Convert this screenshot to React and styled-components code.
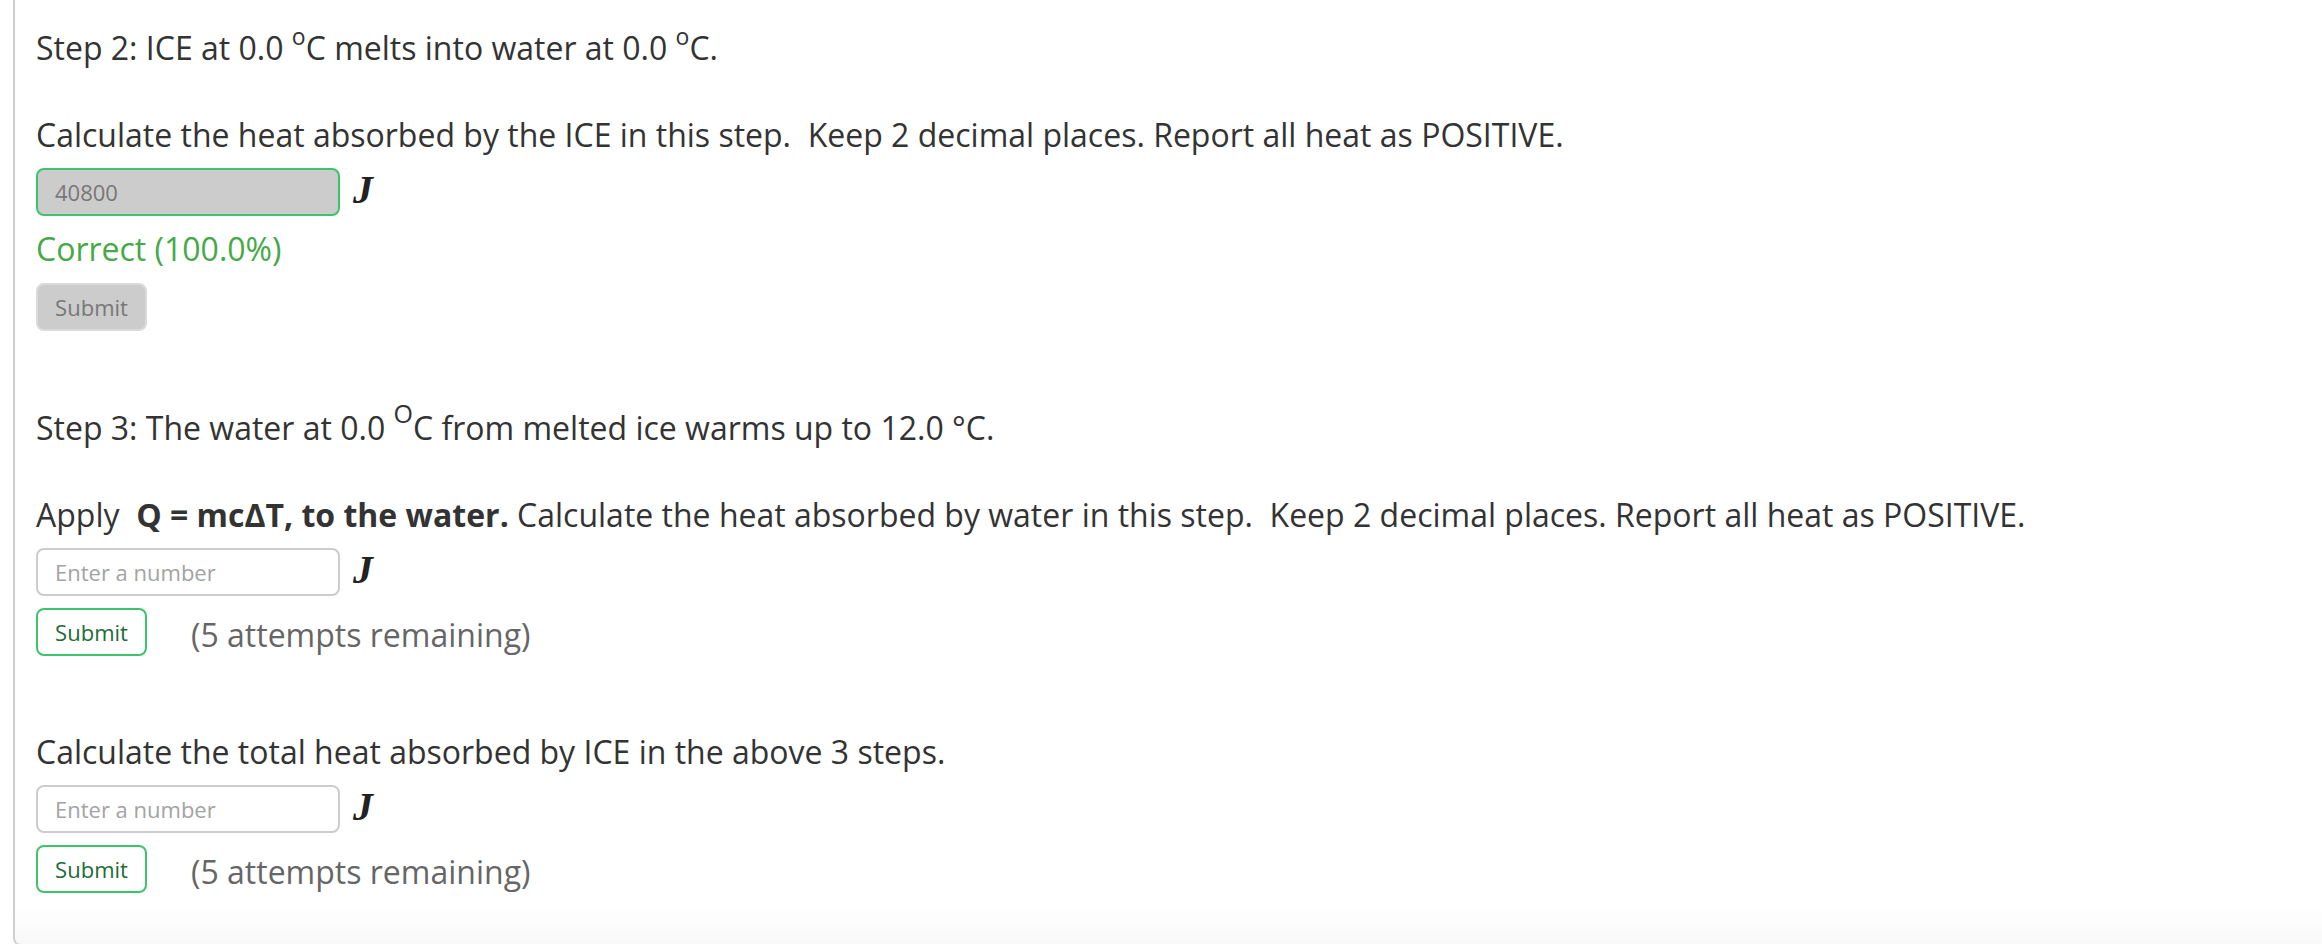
import React from "react";
import styled, { createGlobalStyle } from "styled-components";

const GlobalStyle = createGlobalStyle`
  html, body {
    margin: 0;
    padding: 0;
    background: #fff;
  }
  body {
    font-family: "Open Sans", "Noto Sans", sans-serif;
    color: #333;
  }
`;

const Page = styled.div`
  padding-left: 13px;
  height: 944px;
  box-sizing: border-box;
  overflow: hidden;
`;

const Card = styled.div`
  border-left: 2px solid #cfcfcf;
  border-bottom: 2px solid #d6d6d6;
  border-bottom-left-radius: 8px;
  padding: 26px 0 51px 21px;
  background: linear-gradient(to bottom, #fff 0, #fff calc(100% - 40px), #f9f9f9 100%);
  font-size: 32px;
  line-height: 44px;
`;

const Section = styled.div`
  margin-top: ${(p) => p.$gap || 0}px;
`;

const Line = styled.p`
  margin: 0;
  margin-bottom: ${(p) => (p.$blank ? 43 : 0)}px;
  white-space: pre-wrap;
`;

const Sup = styled.span`
  font-size: ${(p) => (p.$big ? 25 : 23)}px;
  line-height: 0;
  vertical-align: ${(p) => (p.$big ? 17 : 15)}px;
`;

const Bold = styled.b`
  font-weight: 700;
`;

const AnswerRow = styled.div`
  display: flex;
  align-items: center;
  gap: 13px;
  margin-top: 11px;
`;

const NumberInput = styled.input`
  box-sizing: border-box;
  width: 304px;
  height: 48px;
  padding: 0 17px;
  border: 2px solid ${(p) => (p.$correct ? "#3cc46a" : "#cccccc")};
  border-radius: 8px;
  background: ${(p) => (p.disabled ? "#cccccc" : "#fff")};
  color: #777;
  font-family: "Open Sans", sans-serif;
  font-size: 22px;
  outline: none;

  &::placeholder {
    color: #a3a3a3;
  }
`;

const Unit = styled.span`
  font-family: "Liberation Serif", "DejaVu Serif", serif;
  font-style: italic;
  font-weight: 700;
  font-size: 40px;
  line-height: 1;
  color: #222;
  margin-top: -4px;
`;

const Feedback = styled.div`
  margin-top: 11px;
  color: #45a947;
`;

const SubmitRow = styled.div`
  display: flex;
  align-items: center;
  height: 48px;
  gap: 44px;
  margin-top: 12px;
`;

const SubmitButton = styled.button`
  box-sizing: border-box;
  height: 48px;
  width: 111px;
  padding: 0;
  border-radius: 8px;
  font-family: "Open Sans", sans-serif;
  font-size: 22px;
  border: 2px solid ${(p) => (p.disabled ? "#dadada" : "#3cc46a")};
  background: ${(p) => (p.disabled ? "#cccccc" : "#fff")};
  color: ${(p) => (p.disabled ? "#777" : "#1d6b36")};
`;

const Attempts = styled.span`
  color: #666;
  line-height: 1;
  padding-top: 6px;
`;

const Answer = ({ value, correct }) => (
  <AnswerRow>
    {correct ? (
      <NumberInput $correct disabled value={value} readOnly />
    ) : (
      <NumberInput placeholder="Enter a number" />
    )}
    <Unit>J</Unit>
  </AnswerRow>
);

const Submit = ({ done }) => (
  <SubmitRow>
    <SubmitButton disabled={done}>Submit</SubmitButton>
    {!done && <Attempts>(5 attempts remaining)</Attempts>}
  </SubmitRow>
);

export default function App() {
  return (
    <>
      <GlobalStyle />
      <Page>
        <Card>
          <Section>
            <Line $blank>
              Step 2: ICE at 0.0 <Sup>o</Sup>C melts into water at 0.0 <Sup>o</Sup>C.
            </Line>
            <Line>
              {"Calculate the heat absorbed by the ICE in this step.  Keep 2 decimal places. Report all heat as POSITIVE."}
            </Line>
            <Answer correct value="40800" />
            <Feedback>Correct (100.0%)</Feedback>
            <Submit done />
          </Section>

          <Section $gap={75}>
            <Line $blank>
              Step 3: The water at 0.0 <Sup $big>O</Sup>C from melted ice warms up to 12.0 °C.
            </Line>
            <Line>
              {"Apply  "}
              <Bold>Q = mcΔT, to the water.</Bold>
              {" Calculate the heat absorbed by water in this step.  Keep 2 decimal places. Report all heat as POSITIVE."}
            </Line>
            <Answer />
            <Submit />
          </Section>

          <Section $gap={74}>
            <Line>Calculate the total heat absorbed by ICE in the above 3 steps.</Line>
            <Answer />
            <Submit />
          </Section>
        </Card>
      </Page>
    </>
  );
}
